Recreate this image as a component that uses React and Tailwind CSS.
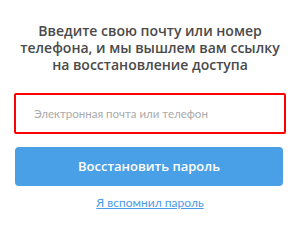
export default function App() {
  return (
    <div className="w-[300px] h-[231px] bg-white font-['Lato',sans-serif] px-[14px] pt-[22px]">
      <h1 className="text-center whitespace-nowrap font-['Open_Sans',sans-serif] text-[14px] leading-[17px] font-semibold text-[#4a4a4a]">
        Введите свою почту или номер
        <br />
        телефона, и мы вышлем вам ссылку
        <br />
        на восстановление доступа
      </h1>
      <input
        type="text"
        placeholder="Электронная почта или телефон"
        className="mt-[20px] w-full h-[41px] border-2 border-[#ff0000] rounded-[2px] px-[18px] text-[11.5px] text-[#333] placeholder-[#aaaaaa] outline-none"
      />
      <button className="mt-[13px] mx-[1px] w-[268px] h-[39px] rounded-[4px] bg-[#4aa0e6] text-white font-['Open_Sans',sans-serif] text-[13px] font-semibold">
        Восстановить пароль
      </button>
      <div className="mt-[7px] text-center leading-[16px]">
        <a href="#" className="text-[12px] text-[#4a9be8] underline">
          Я вспомнил пароль
        </a>
      </div>
    </div>
  );
}
